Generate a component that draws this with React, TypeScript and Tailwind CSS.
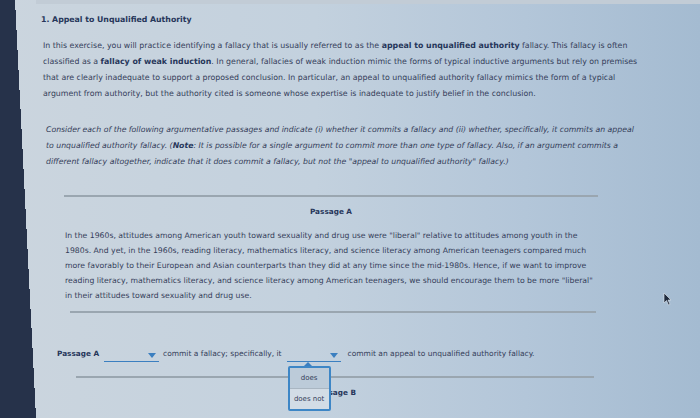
import React from "react";

const font = { fontFamily: '"DejaVu Sans", Verdana, sans-serif' };

function Dropdown({ width, children }: { width: number; children?: React.ReactNode }) {
  return (
    <span className="relative inline-flex items-end" style={{ width }}>
      <span className="block h-[12px] w-full border-b border-[#3b7fc0]" />
      <span className="absolute right-[3px] top-[3px] h-0 w-0 border-x-[4px] border-t-[5px] border-x-transparent border-t-[#3b7fc0]" />
      {children}
    </span>
  );
}

export default function App() {
  return (
    <div
      className="flex h-[418px] w-[700px] overflow-hidden bg-[linear-gradient(to_right,#cbd5de_0%,#c3d1de_45%,#b3c6d9_75%,#a4bbd1_100%)] text-[#35405a]"
      style={font}
    >
      <div className="w-[15px] shrink-0 bg-[#26324a]" />
      <div className="w-[21px] shrink-0 bg-[linear-gradient(to_top_right,#26324a_50%,transparent_50%)]" />
      <div className="relative flex flex-1 flex-col border-t-[4px] border-[#c2ccd6] pt-[8px]">
        <div className="ml-[5px] h-[16px] text-[7.8px] font-bold leading-[16px] text-[#26365a]">
          1. Appeal to Unqualified Authority
        </div>

        <div className="ml-[7px] mt-[10px] whitespace-nowrap text-[7.85px] leading-[16px]">
          <div>
            In this exercise, you will practice identifying a fallacy that is usually referred to as the{" "}
            <b className="text-[#26365a]">appeal to unqualified authority</b> fallacy. This fallacy is often
          </div>
          <div>
            classified as a <b className="text-[#26365a]">fallacy of weak induction</b>. In general, fallacies of weak
            induction mimic the forms of typical inductive arguments but rely on premises
          </div>
          <div>
            that are clearly inadequate to support a proposed conclusion. In particular, an appeal to unqualified
            authority fallacy mimics the form of a typical
          </div>
          <div>
            argument from authority, but the authority cited is someone whose expertise is inadequate to justify belief
            in the conclusion.
          </div>
        </div>

        <div className="ml-[10px] mt-[20px] whitespace-nowrap text-[7.75px] italic leading-[16px]">
          <div>
            Consider each of the following argumentative passages and indicate (i) whether it commits a fallacy and
            (ii) whether, specifically, it commits an appeal
          </div>
          <div>
            to unqualified authority fallacy. (<b className="text-[#26365a]">Note</b>: It is possible for a single
            argument to commit more than one type of fallacy. Also, if an argument commits a
          </div>
          <div>
            different fallacy altogether, indicate that it does commit a fallacy, but not the "appeal to unqualified
            authority" fallacy.)
          </div>
        </div>

        <div className="ml-[28px] mt-[25px] h-[2px] w-[534px] bg-[#9aa6b0]" />

        <div className="ml-[28px] mt-[8px] w-[534px] text-center text-[7.3px] font-bold leading-[14px] text-[#26365a]">
          Passage A
        </div>

        <div className="ml-[29px] mt-[9px] whitespace-nowrap text-[7.72px] leading-[15px]">
          <div>
            In the 1960s, attitudes among American youth toward sexuality and drug use were "liberal" relative to
            attitudes among youth in the
          </div>
          <div>
            1980s. And yet, in the 1960s, reading literacy, mathematics literacy, and science literacy among American
            teenagers compared much
          </div>
          <div>
            more favorably to their European and Asian counterparts than they did at any time since the mid-1980s.
            Hence, if we want to improve
          </div>
          <div>
            reading literacy, mathematics literacy, and science literacy among American teenagers, we should encourage
            them to be more "liberal"
          </div>
          <div>in their attitudes toward sexuality and drug use.</div>
        </div>

        <div className="ml-[34px] mt-[8px] h-[2px] w-[526px] bg-[#9aa6b0]" />

        <div className="ml-[21px] mt-[33px] flex items-end whitespace-nowrap text-[7.5px] leading-[16px]">
          <b className="mr-[5px] text-[7.3px] text-[#26365a]">Passage A</b>
          <Dropdown width={55} />
          <span className="ml-[4px] mr-[5px]">commit a fallacy; specifically, it</span>
          <Dropdown width={54}>
            <span className="absolute left-[17px] top-[12px] h-0 w-0 border-x-[4px] border-b-[4px] border-x-transparent border-b-[#3b7fc0]" />
            <span className="absolute left-[1px] top-[16px] z-10 flex w-[43px] flex-col overflow-hidden rounded-[2px] border-2 border-[#3d86c6] bg-[#d2dce6] text-[7px] leading-[20px]">
              <span className="bg-[#bccbd9] text-center">does</span>
              <span className="h-px bg-[#a9b6c2]" />
              <span className="text-center">does not</span>
            </span>
          </Dropdown>
          <span className="ml-[7px]">commit an appeal to unqualified authority fallacy.</span>
        </div>

        <div className="ml-[40px] mt-[14px] h-[2px] w-[518px] bg-[#9aa6b0]" />

        <div className="ml-[40px] mt-[8px] w-[518px] text-center text-[7.3px] font-bold leading-[14px] text-[#26365a]">
          Passage B
        </div>

        <svg
          className="absolute left-[627px] top-[288px]"
          width="9"
          height="14"
          viewBox="0 0 9 14"
        >
          <path d="M1 1 L1 11 L3.5 8.5 L5.5 13 L7 12.3 L5 8 L8 8 Z" fill="#1f2a3d" stroke="#e6edf3" strokeWidth="0.6" />
        </svg>
      </div>
    </div>
  );
}
